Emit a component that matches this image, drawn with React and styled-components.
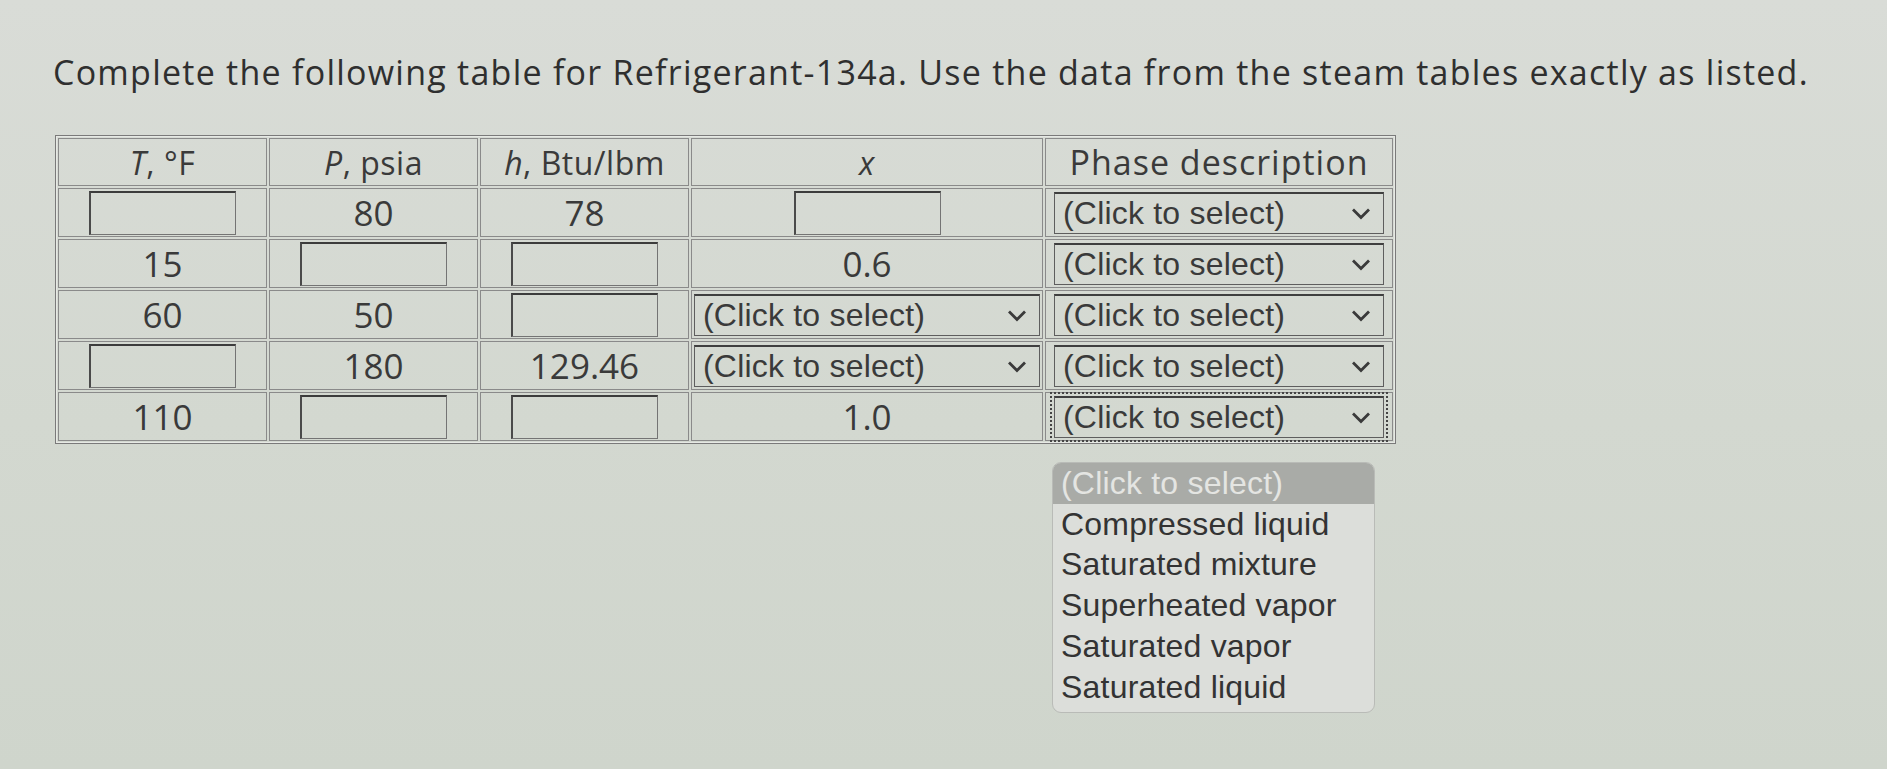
import React from 'react';
import styled, { createGlobalStyle } from 'styled-components';

const GlobalStyle = createGlobalStyle`
  body {
    margin: 0;
    min-height: 100vh;
    background: linear-gradient(180deg, #d9dcd7 0%, #d3d8d0 55%, #cfd5cc 100%);
    font-family: "Open Sans", Lato, sans-serif;
    color: #333333;
  }
`;

const Page = styled.main`
  padding: 51px 0 0 53px;
`;

const Heading = styled.h1`
  margin: 0;
  font-size: 34px;
  line-height: 42px;
  font-weight: 400;
  color: #2f2f2f;
  letter-spacing: 1.25px;
`;

const Table = styled.table`
  margin: 42px 0 0 2px;
  border-collapse: separate;
  border-spacing: 2px;
  border: 1px solid #7a7a7a;
  box-shadow: inset 0 0 0 1px #e6e8e4;
`;

const HeadCell = styled.th`
  box-sizing: border-box;
  width: ${(p) => p.$w}px;
  height: 45px;
  padding: 0;
  border: 1px solid #8a8a8a;
  font-size: ${(p) => (p.$big ? 34 : 32)}px;
  letter-spacing: ${(p) => (p.$big ? 1 : 0.5)}px;
  font-weight: 400;
  color: #3a3a3a;
  text-align: center;
  vertical-align: middle;
`;

const Cell = styled.td`
  position: relative;
  box-sizing: border-box;
  height: 49px;
  padding: ${(p) => (p.$wide ? '0 8px' : '0 2px')};
  border: 1px solid #8a8a8a;
  font-size: 35px;
  color: #3a3a3a;
  text-align: center;
  vertical-align: middle;
`;

const Var = styled.i`
  font-style: italic;
`;

const Blank = styled.input`
  display: block;
  box-sizing: border-box;
  width: 147px;
  height: 44px;
  margin: 0 auto;
  background: transparent;
  border: 1px solid #747474;
  border-top: 2px solid #3c3c3c;
  border-left: 2px solid #4a4a4a;
`;

const Select = styled.div`
  display: flex;
  align-items: center;
  justify-content: space-between;
  box-sizing: border-box;
  height: 42px;
  padding: 0 12px 0 8px;
  border: 1px solid #5e5e5e;
  border-top: 2px solid #3f3f3f;
  font-family: "Liberation Sans", Arial, sans-serif;
  font-size: 32px;
  letter-spacing: 0.2px;
  color: #3a3a3a;
  text-align: left;
  outline: ${(p) => (p.$focused ? '2px dotted #444' : 'none')};
  outline-offset: 2px;
`;

const Chevron = () => (
  <svg width="20" height="13" viewBox="0 0 20 13">
    <polyline points="2,2.5 10,10.5 18,2.5" fill="none" stroke="#3a3a3a" strokeWidth="2.8" />
  </svg>
);

const Menu = styled.ul`
  position: absolute;
  top: calc(100% + 22px);
  left: 6px;
  z-index: 2;
  width: 321px;
  margin: 0;
  padding: 0 0 5px;
  list-style: none;
  background: #dcdeda;
  border: 1px solid #b9bbb7;
  border-radius: 9px;
  overflow: hidden;
  text-align: left;
`;

const Option = styled.li`
  padding: 0 8px;
  font-family: "Liberation Sans", Arial, sans-serif;
  font-size: 32px;
  line-height: 40.7px;
  letter-spacing: 0.2px;
  color: ${(p) => (p.$active ? '#e4e5e2' : '#333333')};
  background: ${(p) => (p.$active ? '#a9aba7' : 'transparent')};
`;

const PLACEHOLDER = '(Click to select)';
const PHASES = [
  'Compressed liquid',
  'Saturated mixture',
  'Superheated vapor',
  'Saturated vapor',
  'Saturated liquid',
];

const rows = [
  { T: null, P: '80', h: '78', x: 'blank' },
  { T: '15', P: null, h: null, x: '0.6' },
  { T: '60', P: '50', h: null, x: 'select' },
  { T: null, P: '180', h: '129.46', x: 'select' },
  { T: '110', P: null, h: null, x: '1.0' },
];

const Value = ({ v }) => (v === null ? <Blank readOnly /> : v);

const Dropdown = ({ focused, open }) => (
  <>
    <Select $focused={focused}>
      <span>{PLACEHOLDER}</span>
      <Chevron />
    </Select>
    {open && (
      <Menu>
        <Option $active>{PLACEHOLDER}</Option>
        {PHASES.map((p) => (
          <Option key={p}>{p}</Option>
        ))}
      </Menu>
    )}
  </>
);

export default function App() {
  return (
    <>
      <GlobalStyle />
      <Page>
        <Heading>
          Complete the following table for Refrigerant-134a. Use the data from the steam tables exactly as listed.
        </Heading>
        <Table>
          <thead>
            <tr>
              <HeadCell $w={209}><Var>T</Var>, °F</HeadCell>
              <HeadCell $w={209}><Var>P</Var>, psia</HeadCell>
              <HeadCell $w={209}><Var>h</Var>, Btu/lbm</HeadCell>
              <HeadCell $w={352}><Var>x</Var></HeadCell>
              <HeadCell $w={348} $big>Phase description</HeadCell>
            </tr>
          </thead>
          <tbody>
            {rows.map((r, i) => (
              <tr key={i}>
                <Cell><Value v={r.T} /></Cell>
                <Cell><Value v={r.P} /></Cell>
                <Cell><Value v={r.h} /></Cell>
                <Cell>
                  {r.x === 'blank' && <Blank readOnly />}
                  {r.x === 'select' && <Dropdown />}
                  {r.x !== 'blank' && r.x !== 'select' && r.x}
                </Cell>
                <Cell $wide>
                  <Dropdown focused={i === 4} open={i === 4} />
                </Cell>
              </tr>
            ))}
          </tbody>
        </Table>
      </Page>
    </>
  );
}
